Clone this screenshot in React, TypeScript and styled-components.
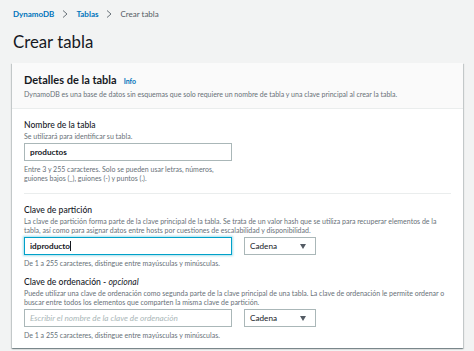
import React from "react";
import styled, { createGlobalStyle } from "styled-components";

const Global = createGlobalStyle`
  html, body { margin: 0; padding: 0; background: #f2f3f3; }
  body { font-family: Lato, "Open Sans", sans-serif; color: #16191f; }
  * { box-sizing: border-box; }
`;

const Page = styled.div`
  width: 474px;
  height: 351px;
  overflow: hidden;
  padding: 8px 11px 0 12px;
  display: flex;
  flex-direction: column;
`;

const Crumbs = styled.nav`
  display: flex;
  align-items: center;
  gap: 8px;
  font-size: 8px;
  height: 12px;
  margin-left: 1px;
`;

const CrumbLink = styled.span`
  color: #0073bb;
  font-weight: 700;
`;

const CrumbCurrent = styled.span`
  color: #545b64;
`;

const Sep = styled.svg`
  width: 6px;
  height: 8px;
`;

const Title = styled.h1`
  margin: 11px 0 0 1px;
  font-size: 16.8px;
  font-weight: 400;
  line-height: 22px;
  color: #16191f;
`;

const Card = styled.section`
  margin-top: 10px;
  background: #fff;
  box-shadow: 0 1px 1px 0 rgba(0, 28, 36, 0.3), 1px 1px 1px 0 rgba(0, 28, 36, 0.15), -1px 1px 1px 0 rgba(0, 28, 36, 0.15);
  flex: none;
`;

const CardHeader = styled.header`
  background: #fafafa;
  border-bottom: 1px solid #eaeded;
  padding: 9px 12px 9px;
`;

const HeaderRow = styled.div`
  display: flex;
  align-items: baseline;
  gap: 7px;
`;

const H2 = styled.h2`
  margin: 0;
  font-size: 11px;
  font-weight: 700;
  line-height: 16px;
`;

const InfoLink = styled.span`
  color: #0073bb;
  font-size: 7px;
  font-weight: 700;
`;

const HeaderDesc = styled.p`
  margin: 2px 0 0;
  font-size: 7px;
  line-height: 9px;
  color: #687078;
`;

const CardBody = styled.div`
  padding: 10px 12px 8px;
  display: flex;
  flex-direction: column;
`;

const Field = styled.div<{ $top?: number }>`
  display: flex;
  flex-direction: column;
  margin-top: ${(p) => p.$top ?? 0}px;
`;

const Label = styled.div`
  font-size: 8.6px;
  font-weight: 500;
  line-height: 12px;
  color: #16191f;
`;

const Opt = styled.i`
  font-style: italic;
  font-weight: 400;
`;

const Desc = styled.div`
  margin-top: 1px;
  font-size: 7px;
  line-height: 9px;
  color: #687078;
`;

const Row = styled.div`
  display: flex;
  gap: 12px;
  margin-top: 2px;
`;

const Input = styled.div<{ $focused?: boolean; $placeholder?: boolean }>`
  width: 208px;
  height: 18px;
  border: 1px solid ${(p) => (p.$focused ? "#00a1c9" : "#aab7b8")};
  box-shadow: ${(p) => (p.$focused ? "0 0 2px 1px rgba(0,161,201,0.35)" : "none")};
  background: #fff;
  display: flex;
  align-items: center;
  padding: 0 5px;
  font-size: 8.2px;
  font-weight: ${(p) => (p.$placeholder ? 400 : 700)};
  font-style: ${(p) => (p.$placeholder ? "italic" : "normal")};
  color: ${(p) => (p.$placeholder ? "#aab7b8" : "#16191f")};
`;

const Caret = styled.span`
  display: inline-block;
  width: 1px;
  height: 10px;
  background: #16191f;
  margin-left: 0.5px;
`;

const Select = styled.div`
  width: 72px;
  height: 18px;
  border: 1px solid #aab7b8;
  background: #fff;
  display: flex;
  align-items: center;
  justify-content: space-between;
  padding: 0 9px 0 5px;
  font-size: 8.2px;
  color: #16191f;
`;

const Hint = styled.div`
  margin-top: 4px;
  font-size: 7px;
  line-height: 9px;
  color: #687078;
`;

const Divider = styled.hr`
  border: none;
  border-top: 1px solid #eaeded;
  margin: 10px 0 10px;
`;

const Chevron = () => (
  <Sep viewBox="0 0 6 8">
    <path d="M1 0.5 L5 4 L1 7.5" fill="none" stroke="#687078" strokeWidth="1" />
  </Sep>
);

const Tri = () => (
  <svg width="6" height="5" viewBox="0 0 6 5">
    <path d="M0 0 H6 L3 5 Z" fill="#545b64" />
  </svg>
);

export default function App() {
  return (
    <>
      <Global />
      <Page>
        <Crumbs>
          <CrumbLink>DynamoDB</CrumbLink>
          <Chevron />
          <CrumbLink>Tablas</CrumbLink>
          <Chevron />
          <CrumbCurrent>Crear tabla</CrumbCurrent>
        </Crumbs>
        <Title>Crear tabla</Title>
        <Card>
          <CardHeader>
            <HeaderRow>
              <H2>Detalles de la tabla</H2>
              <InfoLink>Info</InfoLink>
            </HeaderRow>
            <HeaderDesc>
              DynamoDB es una base de datos sin esquemas que solo requiere un nombre de tabla y una clave principal al crear la tabla.
            </HeaderDesc>
          </CardHeader>
          <CardBody>
            <Field>
              <Label>Nombre de la tabla</Label>
              <Desc>Se utilizará para identificar su tabla.</Desc>
              <Row>
                <Input>productos</Input>
              </Row>
              <Hint>
                Entre 3 y 255 caracteres. Solo se pueden usar letras, números,
                <br />
                guiones bajos (_), guiones (-) y puntos (.).
              </Hint>
            </Field>
            <Divider />
            <Field>
              <Label>Clave de partición</Label>
              <Desc>
                La clave de partición forma parte de la clave principal de la tabla. Se trata de un valor hash que se utiliza para recuperar elementos de la
                <br />
                tabla, así como para asignar datos entre hosts por cuestiones de escalabilidad y disponibilidad.
              </Desc>
              <Row>
                <Input $focused>
                  idproducto
                  <Caret />
                </Input>
                <Select>
                  <span>Cadena</span>
                  <Tri />
                </Select>
              </Row>
              <Hint>De 1 a 255 caracteres, distingue entre mayúsculas y minúsculas.</Hint>
            </Field>
            <Field $top={8}>
              <Label>
                Clave de ordenación - <Opt>opcional</Opt>
              </Label>
              <Desc>
                Puede utilizar una clave de ordenación como segunda parte de la clave principal de una tabla. La clave de ordenación le permite ordenar o
                <br />
                buscar entre todos los elementos que comparten la misma clave de partición.
              </Desc>
              <Row>
                <Input $placeholder>Escribir el nombre de la clave de ordenación</Input>
                <Select>
                  <span>Cadena</span>
                  <Tri />
                </Select>
              </Row>
              <Hint>De 1 a 255 caracteres, distingue entre mayúsculas y minúsculas.</Hint>
            </Field>
          </CardBody>
        </Card>
      </Page>
    </>
  );
}
